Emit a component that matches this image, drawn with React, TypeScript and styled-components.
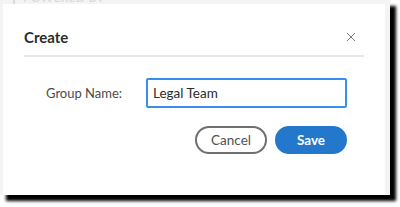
import React from 'react';
import styled, { createGlobalStyle } from 'styled-components';

const GlobalStyle = createGlobalStyle`
  html, body {
    margin: 0;
    padding: 0;
    background: #ffffff;
  }
  body {
    font-family: Lato, "Open Sans", "Liberation Sans", sans-serif;
  }
`;

const Page = styled.div`
  width: 400px;
  height: 207px;
  background: #ffffff;
  overflow: hidden;
`;

const Shot = styled.div`
  width: 390px;
  height: 195px;
  background: #f4f4f4;
  box-shadow: 6px 6px 3px #000000;
  overflow: hidden;
  display: flex;
  flex-direction: column;
`;

const Strip = styled.div`
  height: 4px;
  flex: none;
  overflow: hidden;
  display: flex;
  align-items: flex-end;
  gap: 8px;
  padding-left: 13px;
  color: #dcdcdc;
  font-size: 12px;
  line-height: 12px;
  font-weight: 700;
  letter-spacing: 0.3px;
`;

const Bar = styled.span`
  width: 2px;
  height: 12px;
  background: #dcdcdc;
`;

const Dialog = styled.div`
  flex: 1;
  margin-left: 3px;
  width: 382px;
  background: #ffffff;
  padding: 0 21px;
  box-sizing: border-box;
  display: flex;
  flex-direction: column;
`;

const Header = styled.div`
  height: 53px;
  padding-top: 14px;
  padding-right: 8px;
  box-sizing: border-box;
  display: flex;
  align-items: center;
  justify-content: space-between;
  border-bottom: 2px solid #e8e8e8;
  flex: none;
`;

const Title = styled.h2`
  margin: 0;
  font-size: 15px;
  font-weight: 700;
  color: #2c2c2c;
`;

const Close = styled.button`
  border: none;
  background: none;
  padding: 0;
  width: 10px;
  height: 10px;
  display: flex;
  cursor: pointer;
`;

const Row = styled.div`
  display: flex;
  align-items: center;
  margin-top: 21px;
  padding-left: 22px;
`;

const Label = styled.label`
  width: 100px;
  font-size: 13px;
  color: #4b4b4b;
`;

const Input = styled.input`
  width: 201px;
  height: 30px;
  box-sizing: border-box;
  border: 2px solid #378ef0;
  border-radius: 2px;
  padding: 0 5px;
  font-family: inherit;
  font-size: 13.5px;
  color: #2c2c2c;
  outline: none;
`;

const Actions = styled.div`
  display: flex;
  justify-content: flex-end;
  gap: 8px;
  margin-top: 18px;
  padding-right: 17px;
`;

const Button = styled.button<{ $primary?: boolean }>`
  width: 72px;
  height: 28px;
  border-radius: 14px;
  box-sizing: border-box;
  font-family: inherit;
  font-size: 13.5px;
  cursor: pointer;
  border: 2px solid ${(p) => (p.$primary ? '#2478cc' : '#707070')};
  background: ${(p) => (p.$primary ? '#2478cc' : '#ffffff')};
  color: ${(p) => (p.$primary ? '#ffffff' : '#505050')};
  font-weight: ${(p) => (p.$primary ? 700 : 400)};
`;

export default function App() {
  return (
    <Page>
      <GlobalStyle />
      <Shot>
        <Strip>
          <Bar />
          <span>POWERED BY</span>
        </Strip>
        <Dialog>
          <Header>
            <Title>Create</Title>
            <Close aria-label="Close">
              <svg width="10" height="10" viewBox="0 0 10 10">
                <path d="M1 1L9 9M9 1L1 9" stroke="#7a7a7a" strokeWidth="1" fill="none" />
              </svg>
            </Close>
          </Header>
          <Row>
            <Label>Group Name:</Label>
            <Input defaultValue="Legal Team" />
          </Row>
          <Actions>
            <Button>Cancel</Button>
            <Button $primary>Save</Button>
          </Actions>
        </Dialog>
      </Shot>
    </Page>
  );
}
